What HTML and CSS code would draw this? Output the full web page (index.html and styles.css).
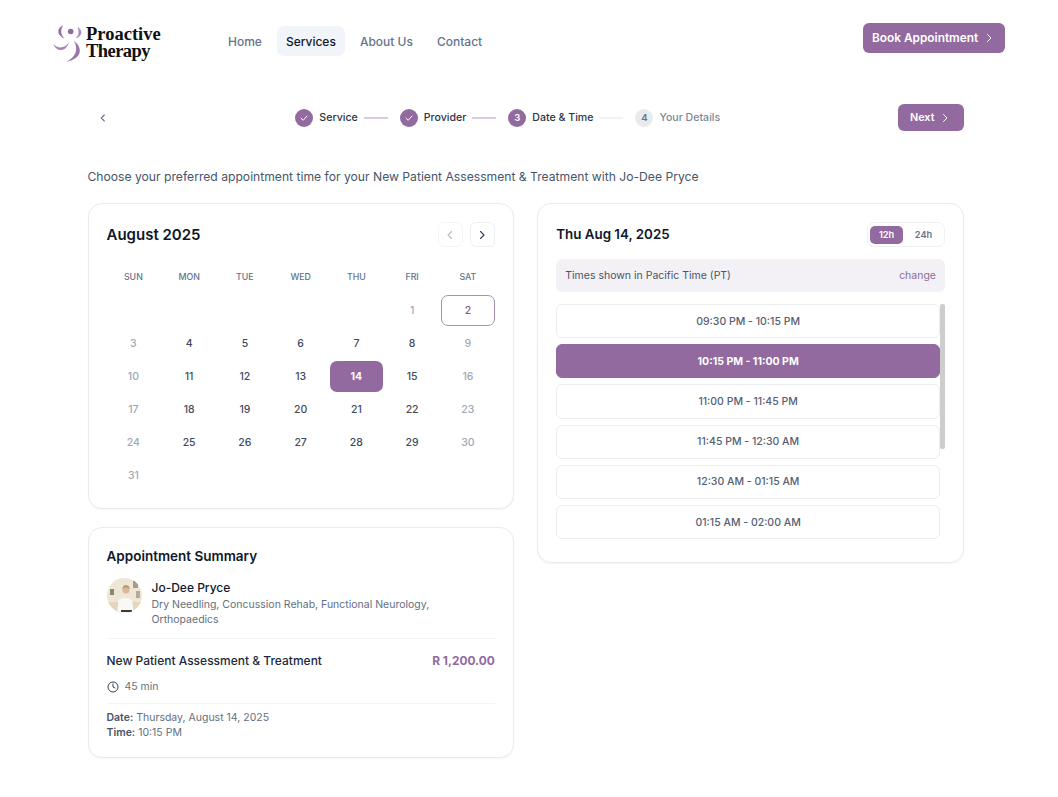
FILE: index.html
```html
<!DOCTYPE html>
<html lang="en">
<head>
<meta charset="utf-8">
<title>Proactive Therapy - Book</title>
<link rel="stylesheet" href="styles.css">
</head>
<body>
<header class="site-header">
  <div class="logo">
    <svg class="logo-mark" width="32" height="38" viewBox="0 0 32 38" fill="none">
      <circle cx="17.700" cy="7.500" r="2.800" fill="#8f6a9f"/>
      <path d="M9.500 2C4.500 4 4 10.500 10.500 14C7.500 10.500 7 6 9.500 2Z" fill="#8f6a9f" stroke="#8f6a9f" stroke-width=".6"/>
      <path d="M25 3.500C29.500 6.500 29 11.500 23.500 14C26 11 26.500 7.500 25 3.500Z" fill="#a98ab5" stroke="#a98ab5" stroke-width=".6"/>
      <path d="M.3 20C5 25 11.500 24.500 16 18.500C13 28 3.500 28.500 .3 20Z" fill="#a685b3"/>
      <path d="M21 17C29.500 23 30 34.500 13.500 37.700C22 33.500 26 26 21 17Z" fill="#9a77a8"/>
    </svg>
    <div class="logo-text"><span>Proactive</span><span class="logo-second">Therapy</span></div>
  </div>
  <nav class="nav">
    <a class="nav-item">Home</a>
    <a class="nav-item active">Services</a>
    <a class="nav-item">About Us</a>
    <a class="nav-item">Contact</a>
  </nav>
  <button class="btn btn-book">Book Appointment
    <svg width="12" height="12" viewBox="0 0 12 12" fill="none"><path d="M4.500 2.500 8 6 4.500 9.500" stroke="currentColor" stroke-width="1" stroke-linecap="round" stroke-linejoin="round"/></svg>
  </button>
</header>

<main class="main">
  <div class="stepbar">
    <button class="back" aria-label="Back">
      <svg width="12" height="12" viewBox="0 0 12 12" fill="none"><path d="M7.300 3 4.300 6 7.300 9" stroke="#64748b" stroke-width="1.100" stroke-linecap="round" stroke-linejoin="round"/></svg>
    </button>
    <ol class="steps">
      <li class="step"><span class="dot done"><svg width="10" height="10" viewBox="0 0 10 10" fill="none"><path d="M2 5.200 4.200 7.300 8 3" stroke="#fff" stroke-width="1" stroke-linecap="round" stroke-linejoin="round"/></svg></span><span class="step-label">Service</span><i class="line on"></i></li>
      <li class="step"><span class="dot done"><svg width="10" height="10" viewBox="0 0 10 10" fill="none"><path d="M2 5.200 4.200 7.300 8 3" stroke="#fff" stroke-width="1" stroke-linecap="round" stroke-linejoin="round"/></svg></span><span class="step-label">Provider</span><i class="line on"></i></li>
      <li class="step"><span class="dot done">3</span><span class="step-label">Date &amp; Time</span><i class="line"></i></li>
      <li class="step"><span class="dot todo">4</span><span class="step-label muted">Your Details</span></li>
    </ol>
    <button class="btn btn-next">Next
      <svg width="12" height="12" viewBox="0 0 12 12" fill="none"><path d="M4.500 2.500 8 6 4.500 9.500" stroke="currentColor" stroke-width="1" stroke-linecap="round" stroke-linejoin="round"/></svg>
    </button>
  </div>

  <p class="intro">Choose your preferred appointment time for your New Patient Assessment &amp; Treatment with Jo-Dee Pryce</p>

  <div class="columns">
    <div class="col">
      <section class="card calendar">
        <div class="cal-head">
          <h2 class="title-lg">August 2025</h2>
          <div class="cal-arrows">
            <button class="arrow off"><svg width="12" height="12" viewBox="0 0 12 12" fill="none"><path d="M7.500 2.500 4 6 7.500 9.500" stroke="#b6bcc6" stroke-width="1.100" stroke-linecap="round" stroke-linejoin="round"/></svg></button>
            <button class="arrow"><svg width="12" height="12" viewBox="0 0 12 12" fill="none"><path d="M4.500 2.500 8 6 4.500 9.500" stroke="#334155" stroke-width="1.100" stroke-linecap="round" stroke-linejoin="round"/></svg></button>
          </div>
        </div>
        <div class="grid dow">
          <span>SUN</span><span>MON</span><span>TUE</span><span>WED</span><span>THU</span><span>FRI</span><span>SAT</span>
        </div>
        <div class="grid days">
          <span></span><span></span><span></span><span></span><span></span><span class="off">1</span><span class="today">2</span>
          <span class="off">3</span><span>4</span><span>5</span><span>6</span><span>7</span><span>8</span><span class="off">9</span>
          <span class="off">10</span><span>11</span><span>12</span><span>13</span><span class="sel">14</span><span>15</span><span class="off">16</span>
          <span class="off">17</span><span>18</span><span>19</span><span>20</span><span>21</span><span>22</span><span class="off">23</span>
          <span class="off">24</span><span>25</span><span>26</span><span>27</span><span>28</span><span>29</span><span class="off">30</span>
          <span class="off">31</span>
        </div>
      </section>

      <section class="card summary">
        <h2 class="title-md">Appointment Summary</h2>
        <div class="provider">
          <svg class="avatar" width="35" height="35" viewBox="0 0 35 35">
            <defs><clipPath id="av"><circle cx="17.500" cy="17.500" r="17.500"/></clipPath></defs>
            <g clip-path="url(#av)">
              <rect width="35" height="35" fill="#efe7d6"/>
              <rect x="0" y="24" width="35" height="11" fill="#e2d7bd"/>
              <rect x="3" y="11" width="4" height="6" fill="#8d8674"/>
              <rect x="26" y="3" width="5" height="7" fill="#a49c88"/>
              <rect x="29" y="13" width="4" height="7" fill="#b3ab97"/>
              <path d="M10 35 11.500 22Q18 18 25 22L27 35Z" fill="#f8f8f6"/>
              <rect x="14" y="32" width="11" height="2" fill="#3d3a36"/>
              <circle cx="19" cy="12" r="3.600" fill="#dcb89b"/>
              <path d="M15.300 11Q16 6.500 19 7Q22.500 7 22.700 11Q19 8.500 15.300 11Z" fill="#b69f78"/>
            </g>
          </svg>
          <div class="provider-text">
            <div class="provider-name">Jo-Dee Pryce</div>
            <div class="provider-tags">Dry Needling, Concussion Rehab, Functional Neurology, Orthopaedics</div>
          </div>
        </div>
        <div class="service-row">
          <div class="service-top"><span class="service-name">New Patient Assessment &amp; Treatment</span><span class="price">R 1,200.00</span></div>
          <div class="duration">
            <svg width="12" height="12" viewBox="0 0 12 12" fill="none"><circle cx="6" cy="6" r="5" stroke="#334155" stroke-width="1"/><path d="M6 3v3l2 1" stroke="#334155" stroke-width="1" stroke-linecap="round" stroke-linejoin="round"/></svg>
            45 min
          </div>
        </div>
        <div class="when">
          <div><b>Date:</b> Thursday, August 14, 2025</div>
          <div><b>Time:</b> 10:15 PM</div>
        </div>
      </section>
    </div>

    <section class="card times">
      <div class="times-head">
        <h2 class="title-md wide">Thu Aug 14, 2025</h2>
        <div class="toggle"><span class="tog on">12h</span><span class="tog">24h</span></div>
      </div>
      <div class="tz"><span>Times shown in Pacific Time (PT)</span><a class="tz-change">change</a></div>
      <div class="slots-wrap">
        <div class="slots">
          <button class="slot">09:30 PM - 10:15 PM</button>
          <button class="slot sel">10:15 PM - 11:00 PM</button>
          <button class="slot">11:00 PM - 11:45 PM</button>
          <button class="slot">11:45 PM - 12:30 AM</button>
          <button class="slot">12:30 AM - 01:15 AM</button>
          <button class="slot">01:15 AM - 02:00 AM</button>
        </div>
        <div class="scroll-thumb"></div>
      </div>
    </section>
  </div>
</main>
</body>
</html>
```
FILE: styles.css
```css
* { box-sizing: border-box; }
html, body { margin: 0; padding: 0; }
body { background: #fff; font-family: Inter, "Liberation Sans", sans-serif; color: #0f172a; width: 1058px; height: 797px; overflow: hidden; }
h2, p, ol { margin: 0; padding: 0; }
button { font-family: inherit; border: 0; background: none; padding: 0; cursor: pointer; }

.site-header { display: flex; align-items: flex-start; padding: 23px 53px 0; height: 104px; }
.logo { display: flex; align-items: center; gap: 1px; width: 166px; height: 40px; }
.logo-mark { flex: none; }
.logo-text { display: flex; flex-direction: column; font-family: "Liberation Serif", serif; font-weight: 700; font-size: 18.500px; line-height: 17px; color: #111; }
.logo-second { letter-spacing: -.55px; }
.nav { display: flex; gap: 6px; margin-top: 3px; flex: 1; }
.nav-item { padding: 0 9px; height: 30px; line-height: 31px; font-size: 12px; font-weight: 500; color: #64748b; border-radius: 7px; }
.nav-item.active { background: #f1f5f9; color: #0f172a; }
.btn { display: flex; align-items: center; background: #926aa0; color: #fff; font-weight: 600; border-radius: 6px; }
.btn-book { height: 30px; width: 142px; padding-left: 9px; gap: 5px; font-size: 11.850px; }
.btn-next { height: 27px; width: 66px; padding-left: 12px; gap: 5px; font-size: 10.800px; }

.main { width: 876.500px; margin-left: 87.500px; }
.stepbar { display: flex; align-items: center; justify-content: space-between; height: 27px; }
.back { width: 30px; height: 27px; display: flex; align-items: center; justify-content: center; }
.steps { list-style: none; display: flex; gap: 12px; }
.step { display: flex; align-items: center; font-size: 10.600px; font-weight: 500; color: #293548; }
.dot { width: 18px; height: 18px; border-radius: 50%; display: flex; align-items: center; justify-content: center; font-size: 9.500px; font-weight: 600; margin-right: 6px; }
.dot.done { background: #926aa0; color: #fff; }
.dot.todo { background: #e8eaee; color: #64748b; }
.muted { color: #7c8798; }
.line { display: block; width: 24px; height: 2px; margin-left: 6px; background: #f1f3f6; }
.line.on { background: #d8cbdf; }

.intro { margin-top: 37px; font-size: 12.150px; line-height: 18px; color: #475569; }
.columns { display: flex; gap: 23.500px; margin-top: 17px; align-items: flex-start; }
.col { display: flex; flex-direction: column; gap: 18px; width: 426.250px; }
.card { background: #fff; border: 1px solid #e9ebef; border-radius: 14px; padding: 18px; box-shadow: 0 1px 2px rgba(15, 23, 42, .04); }
.title-lg { font-size: 15px; line-height: 24px; font-weight: 600; color: #0f172a; }
.title-md { font-size: 13.500px; line-height: 20px; font-weight: 600; color: #0f172a; }
.title-md.wide { font-size: 13.350px; margin-top: -2px; }

.calendar { height: 306px; }
.cal-head { display: flex; justify-content: space-between; align-items: center; height: 25px; }
.cal-arrows { display: flex; gap: 7px; }
.arrow { width: 25px; height: 25px; border: 1px solid #edeff3; border-radius: 6px; background: #fff; display: flex; align-items: center; justify-content: center; }
.arrow.off { border-color: #f4f5f7; }
.grid { display: grid; grid-template-columns: repeat(7, 1fr); column-gap: 2px; }
.dow { margin-top: 23px; text-align: center; font-size: 8.800px; line-height: 14px; font-weight: 500; color: #64748b; }
.days { margin-top: 11px; grid-auto-rows: 31px; row-gap: 2px; font-size: 10.500px; font-weight: 500; color: #3f4a5c; }
.days span { display: flex; align-items: center; justify-content: center; border-radius: 7px; }
.days .off { color: #a0a8b4; }
.days .today { border: 1px solid #a88fb3; color: #7f5c8e; }
.days .sel { background: #926aa0; color: #fff; font-weight: 700; }

.summary { height: 231px; }
.provider { display: flex; gap: 10px; margin-top: 12px; padding-bottom: 11px; border-bottom: 1px solid #f3f4f6; }
.avatar { flex: none; }
.provider-name { font-size: 12px; line-height: 17px; font-weight: 500; color: #0f172a; margin-top: 1px; }
.provider-tags { font-size: 10.500px; line-height: 15px; color: #64707f; width: 300px; margin-top: 1px; }
.service-row { padding: 13px 0 9px; border-bottom: 1px solid #f3f4f6; }
.service-top { display: flex; justify-content: space-between; align-items: center; }
.service-name { font-size: 12px; line-height: 17px; font-weight: 500; color: #1e293b; }
.price { font-size: 11.900px; font-weight: 700; color: #926aa0; }
.duration { display: flex; align-items: center; gap: 6px; margin-top: 10px; font-size: 10.500px; line-height: 15px; color: #64707f; }
.when { margin-top: 6px; font-size: 10.500px; line-height: 15px; color: #64707f; }
.when b { font-weight: 600; color: #475569; }

.times { width: 426.750px; height: 360px; }
.times-head { display: flex; justify-content: space-between; align-items: center; height: 25px; }
.toggle { display: flex; align-items: center; gap: 4px; width: 78px; height: 25px; padding: 0 2px; border: 1px solid #f0f1f4; border-radius: 7px; }
.tog { width: 33px; height: 18px; border-radius: 5px; display: flex; align-items: center; justify-content: center; font-size: 9.200px; font-weight: 600; color: #64748b; }
.tog.on { background: #926aa0; color: #fff; }
.tz { display: flex; justify-content: space-between; align-items: center; height: 33px; margin-top: 12px; padding: 0 9px; background: #f3f1f6; border-radius: 6px; font-size: 10.500px; color: #475569; }
.tz-change { color: #8c6f99; }
.slots-wrap { display: flex; justify-content: space-between; margin-top: 12px; }
.slots { display: flex; flex-direction: column; gap: 6px; width: 384px; }
.slot { height: 34.200px; border: 1px solid #eceef1; border-radius: 6px; background: #fff; font-size: 10.500px; font-weight: 500; color: #566070; text-align: center; }
.slot.sel { background: #926aa0; border-color: #926aa0; color: #fff; font-weight: 700; }
.scroll-thumb { width: 5px; height: 145px; background: #cdcdcd; border-radius: 2px; }
```
